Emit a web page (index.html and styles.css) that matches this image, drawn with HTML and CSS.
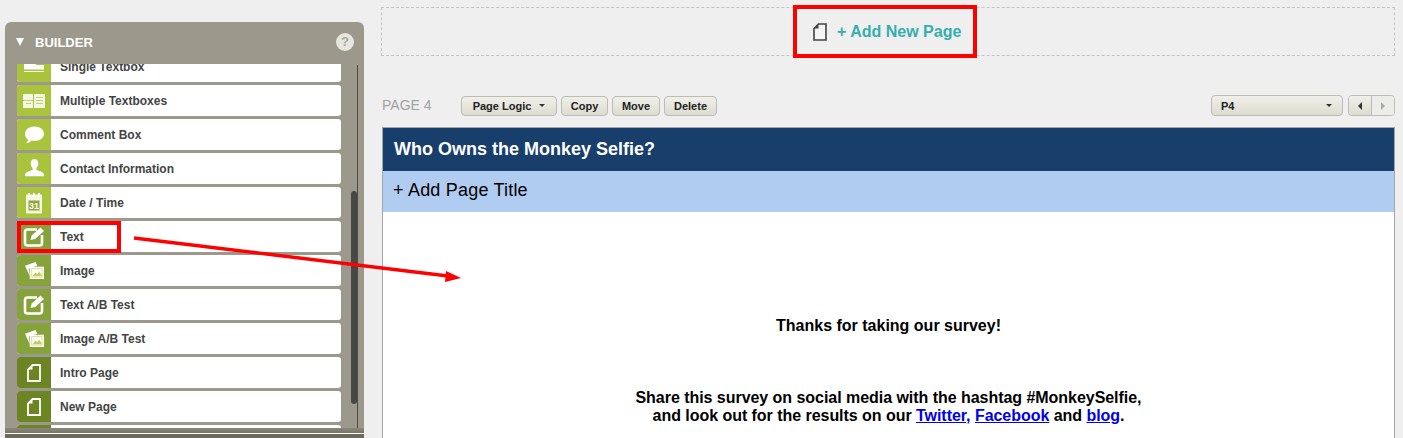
FILE: index.html
```html
<!DOCTYPE html>
<html lang="en">
<head>
    <meta charset="UTF-8">
    <title>Survey Builder</title>
    <link rel="stylesheet" href="styles.css">
</head>
<body>
    <svg class="icon-defs" width="0" height="0">
        <symbol id="i-single" viewBox="0 0 22 22">
            <path d="M1 1h12v8h8v4.500H1z" fill="#fff"/>
            <path d="M1 15h20v1H1z" fill="#f4f7e2"/>
        </symbol>
        <symbol id="i-multi" viewBox="0 0 22 16">
            <path d="M0 1h10v14H0zM11 1h11v14H11z" fill="#f4f7e2"/>
            <path d="M0 7h10v1H0zM13 4h7v1h-7zM13 7h7v1h-7zM13 10h7v1h-7zM3 10h5v1H3z" fill="#c3d56a"/>
        </symbol>
        <symbol id="i-comment" viewBox="0 0 22 20">
            <path d="M11 1c5.500 0 10 3.300 10 7.600s-4.500 7.600-10 7.600c-1 0-2-.1-3-.4C6.500 17.500 4.500 18.500 2 18.700c1.200-1 2-2.300 2.200-4C2.200 13.200 1 11 1 8.600 1 4.300 5.500 1 11 1z" fill="#fff"/>
        </symbol>
        <symbol id="i-person" viewBox="0 0 22 22">
            <path d="M11 1c2.500 0 4 2 4 4.800 0 2-.8 3.700-2 4.700v2c3 1 7 2 8 4.500v2H1v-2c1-2.500 5-3.500 8-4.500v-2C7.800 9.500 7 7.800 7 5.800 7 3 8.500 1 11 1z" fill="#fff"/>
        </symbol>
        <symbol id="i-cal" viewBox="0 0 18 22">
            <path d="M1 2.500h16v19H1z" fill="#f4f7e2"/>
            <path d="M3 1h2v4H3zM8 1h2v4H8zM13 1h2v4h-2z" fill="#fff"/>
            <path d="M3.500 8.500h11v10h-11z" fill="#8fa838"/>
            <text x="9" y="17" text-anchor="middle" class="cal-day">31</text>
        </symbol>
        <symbol id="i-edit" viewBox="0 0 22 21">
            <path d="M14 3.500H4.500a2.500 2.500 0 0 0-2.500 2.500v11a2.500 2.500 0 0 0 2.500 2.500h12a2.500 2.500 0 0 0 2.500-2.500V9" fill="none" stroke="#fff" stroke-width="2.600"/>
            <path d="M7.500 14l1.200-4.500L17.500 1.500l3.500 3.500-8.800 8z" fill="#fff"/>
        </symbol>
        <symbol id="i-image" viewBox="0 0 22 20">
            <path d="M1 5l11-4 2 4-9 3 1 8z" fill="#fff"/>
            <path d="M6 6h15v13H6z" fill="#fff"/>
            <path d="M8 8h11v9H8z" fill="none" stroke="#d8de8c" stroke-width="1"/>
            <path d="M9 16l3-4 2 2 2-3 3 5z" fill="#c4cd5c"/>
        </symbol>
        <symbol id="i-page" viewBox="0 0 14 18">
            <path d="M5.500 1h7.500v16H1V5.500z" fill="none" stroke="#fff" stroke-width="1.800"/>
            <path d="M1 5.500l4.500-4.500v4.500z" fill="#fff"/>
        </symbol>
    </svg>

    <div class="builder">
        <div class="builder-head">
            <span class="builder-caret"></span>
            <span class="builder-title">BUILDER</span>
            <span class="builder-help">?</span>
        </div>
        <div class="builder-view">
            <ul class="block-list">
                <li class="block"><span class="block-icon tone-a"><svg width="22" height="22"><use href="#i-single"/></svg></span>Single Textbox</li>
                <li class="block"><span class="block-icon tone-a"><svg width="22" height="16"><use href="#i-multi"/></svg></span>Multiple Textboxes</li>
                <li class="block"><span class="block-icon tone-a"><svg width="21" height="20"><use href="#i-comment"/></svg></span>Comment Box</li>
                <li class="block"><span class="block-icon tone-a"><svg width="21" height="21"><use href="#i-person"/></svg></span>Contact Information</li>
                <li class="block"><span class="block-icon tone-a"><svg width="18" height="22"><use href="#i-cal"/></svg></span>Date / Time</li>
                <li class="block"><span class="block-icon tone-b"><svg width="22" height="21"><use href="#i-edit"/></svg></span>Text</li>
                <li class="block"><span class="block-icon tone-b"><svg width="21" height="19"><use href="#i-image"/></svg></span>Image</li>
                <li class="block"><span class="block-icon tone-b"><svg width="22" height="21"><use href="#i-edit"/></svg></span>Text A/B Test</li>
                <li class="block"><span class="block-icon tone-b"><svg width="21" height="19"><use href="#i-image"/></svg></span>Image A/B Test</li>
                <li class="block"><span class="block-icon tone-c"><svg width="14" height="18"><use href="#i-page"/></svg></span>Intro Page</li>
                <li class="block"><span class="block-icon tone-c"><svg width="14" height="18"><use href="#i-page"/></svg></span>New Page</li>
                <li class="block"><span class="block-icon tone-c"></span></li>
            </ul>
            <div class="scroll-track"></div>
            <div class="scroll-thumb"></div>
        </div>
        <div class="builder-foot"></div>
    </div>

    <div class="main">
        <div class="add-page">
            <svg class="add-page-icon" width="14" height="18" viewBox="0 0 14 18"><path d="M5.500 1h7.500v16H1V5.500z" fill="#f4f4f4" stroke="#444" stroke-width="1.600"/><path d="M1 5.500l4.500-4.500v4.500z" fill="#444"/></svg>
            <span class="add-page-label">+ Add New Page</span>
        </div>

        <div class="page-bar">
            <span class="page-num">PAGE 4</span>
            <button class="btn btn-logic">Page Logic<i class="caret"></i></button>
            <button class="btn btn-copy">Copy</button>
            <button class="btn btn-move">Move</button>
            <button class="btn btn-delete">Delete</button>
            <span class="page-bar-fill"></span>
            <button class="btn page-select">P4<i class="caret"></i></button>
            <span class="pager">
                <button class="pager-btn"><i class="arrow-left"></i></button>
                <button class="pager-btn pager-off"><i class="arrow-right"></i></button>
            </span>
        </div>

        <div class="page">
            <div class="page-title">Who Owns the Monkey Selfie?</div>
            <div class="page-sub">+ Add Page Title</div>
            <div class="page-body">
                <p class="thanks">Thanks for taking our survey!</p>
                <p class="share">Share this survey on social media with the hashtag #MonkeySelfie,<br>and look out for the results on our <a href="#">Twitter,</a> <a href="#">Facebook</a> and <a href="#">blog</a>.</p>
            </div>
        </div>
    </div>

    <!-- annotations drawn over the screenshot -->
    <div class="mark mark-add"></div>
    <div class="mark mark-text"></div>
    <svg class="mark-arrow" width="1403" height="438" viewBox="0 0 1403 438">
        <path d="M134 238L448 276" stroke="#f00" stroke-width="3.500" fill="none"/>
        <path d="M461 278L446 271L445 282z" fill="#f00"/>
    </svg>
</body>
</html>
```

FILE: styles.css
```css
html, body {
    margin: 0;
    height: 438px;
    overflow: hidden;
}
body {
    display: flex;
    align-items: flex-start;
    background-color: #efefef;
    font-family: "Liberation Sans", Arial, sans-serif;
    position: relative;
}
.icon-defs {
    position: absolute;
}
.cal-day {
    font-family: "Liberation Sans", Arial, sans-serif;
    font-size: 9px;
    font-weight: bold;
    fill: #fff;
}

/* left panel */
.builder {
    width: 359px;
    height: 416px;
    margin: 22px 0 0 5px;
    flex: none;
    background-color: #9c998c;
    border-radius: 6px 6px 0 0;
    display: flex;
    flex-direction: column;
}
.builder-head {
    height: 42px;
    flex: none;
    display: flex;
    align-items: center;
    padding: 0 10px 2px 11px;
    box-sizing: border-box;
    color: #fff;
}
.builder-caret {
    width: 0;
    height: 0;
    border-left: 4px solid transparent;
    border-right: 4px solid transparent;
    border-top: 8px solid #fff;
}
.builder-title {
    margin-left: 11px;
    font-size: 13px;
    font-weight: bold;
    flex: 1;
}
.builder-help {
    width: 18px;
    height: 18px;
    border-radius: 50%;
    background-color: #e6e5df;
    color: #a9a79c;
    font-size: 13px;
    font-weight: bold;
    line-height: 18px;
    text-align: center;
}
.builder-view {
    height: 364px;
    flex: none;
    overflow: hidden;
    position: relative;
}
.block-list {
    list-style: none;
    margin: -13px 0 0 12px;
    padding: 0;
    width: 324px;
}
.block {
    height: 31px;
    margin-bottom: 3px;
    display: flex;
    align-items: center;
    background-color: #fff;
    border-radius: 3px;
    overflow: hidden;
    font-size: 12px;
    font-weight: bold;
    color: #444;
}
.block-icon {
    width: 34px;
    height: 100%;
    flex: none;
    margin-right: 9px;
    display: flex;
    align-items: center;
    justify-content: center;
}
.tone-a { background-color: #a9c33c; }
.tone-b { background-color: #86a23a; }
.tone-c { background-color: #6d8423; }
.scroll-track {
    position: absolute;
    left: 352px;
    top: 1px;
    bottom: 0;
    width: 1px;
    background-color: #4a4a46;
}
.scroll-thumb {
    position: absolute;
    left: 346px;
    top: 127px;
    width: 6px;
    height: 213px;
    border-radius: 3px;
    background-color: #474744;
}
.builder-foot {
    flex: 1;
    background: linear-gradient(#8a887b, #77756a 5px, #fff 5px, #fff 6px, #6b6a5c 6px);
}

/* right column */
.main {
    width: 1014px;
    margin: 7px 0 0 17px;
    flex: none;
}
.add-page {
    height: 49px;
    box-sizing: border-box;
    border: 1px dashed #c4c4c4;
    display: flex;
    align-items: center;
    padding-left: 431px;
}
.add-page-label {
    margin-left: 10px;
    font-size: 16px;
    font-weight: bold;
    color: #35aeb0;
}
.page-bar {
    height: 21px;
    margin-top: 39px;
    padding-left: 1px;
    display: flex;
    align-items: center;
}
.page-num {
    width: 79px;
    padding-bottom: 2px;
    font-size: 14px;
    color: #a2a2a2;
}
.btn {
    height: 20px;
    margin-right: 4px;
    padding: 0;
    border: 1px solid #bcbcb4;
    border-radius: 4px;
    background: linear-gradient(#f0f0ea, #dcdcd0);
    color: #222;
    font-family: inherit;
    font-size: 11px;
    font-weight: bold;
    display: flex;
    align-items: center;
    justify-content: center;
}
.btn-logic { width: 96px; }
.btn-copy { width: 47px; }
.btn-move { width: 48px; }
.btn-delete { width: 53px; margin-right: 0; }
.caret {
    width: 0;
    height: 0;
    margin-left: 8px;
    border-left: 3px solid transparent;
    border-right: 3px solid transparent;
    border-top: 3px solid #333;
}
.page-bar-fill {
    flex: 1;
}
.page-select {
    width: 132px;
    height: 21px;
    margin-right: 5px;
    justify-content: space-between;
    padding: 0 10px 0 9px;
}
.pager {
    display: flex;
    width: 47px;
    height: 21px;
    box-sizing: border-box;
    border: 1px solid #bcbcb4;
    border-radius: 4px;
    overflow: hidden;
}
.pager-btn {
    flex: 1;
    padding: 0;
    border: none;
    background: linear-gradient(#f0f0ea, #dcdcd0);
    display: flex;
    align-items: center;
    justify-content: center;
}
.pager-btn:first-child {
    border-right: 1px solid #bcbcb4;
}
.pager-off {
    background: #ecece8;
}
.arrow-left {
    width: 0;
    height: 0;
    border-top: 4px solid transparent;
    border-bottom: 4px solid transparent;
    border-right: 4px solid #333;
}
.arrow-right {
    width: 0;
    height: 0;
    border-top: 4px solid transparent;
    border-bottom: 4px solid transparent;
    border-left: 4px solid #aaa;
}
.page {
    margin: 11px 0 0 1px;
    height: 320px;
    box-sizing: border-box;
    border: 1px solid #a5a5a5;
    border-width: 1px 1px 0;
    background-color: #fff;
}
.page-title {
    height: 43px;
    line-height: 42px;
    padding-left: 11px;
    background-color: #183e6b;
    color: #fff;
    font-size: 18px;
    font-weight: bold;
}
.page-sub {
    height: 41px;
    line-height: 39px;
    padding-left: 10px;
    background-color: #b1ccf1;
    color: #000;
    font-size: 18px;
    letter-spacing: 0.2px;
}
.page-body {
    text-align: center;
    color: #000;
    font-size: 16px;
    font-weight: bold;
    line-height: 18px;
}
.page-body a {
    color: #00e;
}
.thanks {
    margin: 105px 0 0;
}
.share {
    margin: 54px 0 0;
    letter-spacing: -0.04px;
}

/* red annotations */
.mark {
    position: absolute;
    box-sizing: border-box;
    border: 4px solid #f00;
}
.mark-add {
    left: 793px;
    top: 5px;
    width: 184px;
    height: 53px;
}
.mark-text {
    left: 17px;
    top: 221px;
    width: 104px;
    height: 32px;
}
.mark-arrow {
    position: absolute;
    left: 0;
    top: 0;
}
```
